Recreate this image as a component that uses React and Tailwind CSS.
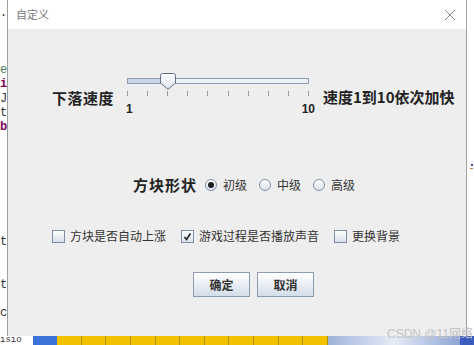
import React, { useState } from 'react';

const codeLines = ['.', '', '', '', 'e', 'i', 'J', 't', 'b', '', '', '', '', '', '', '', 't', '', '', 't', '', 'c'];
const codeColor = { e: 'text-[#3f7f5f]', i: 'text-[#7f0055] font-bold', b: 'text-[#7f0055] font-bold' };

const Radio = ({ checked, label, onClick }) => (
  <div onClick={onClick} className="flex items-center gap-[6px] cursor-pointer">
    <span className="w-[12px] h-[12px] rounded-full border border-[#7d8ea6] bg-gradient-to-b from-white to-[#d9e1eb] flex items-center justify-center">
      {checked && <span className="w-[6px] h-[6px] rounded-full bg-[#1e1e1e]"></span>}
    </span>
    <span className="text-[12px] text-[#333]">{label}</span>
  </div>
);

const Check = ({ checked, label, onClick }) => (
  <div onClick={onClick} className="flex items-center gap-[5px] cursor-pointer">
    <span className="w-[13px] h-[13px] border border-[#7d8ea6] bg-gradient-to-b from-white to-[#d9e1eb] flex items-center justify-center">
      {checked && (
        <svg width="9" height="9" viewBox="0 0 9 9">
          <path d="M1.5 5 L3.5 7.5 L7.5 1.5" stroke="#1e1e1e" strokeWidth="1.6" fill="none" />
        </svg>
      )}
    </span>
    <span className="text-[12px] text-[#333]">{label}</span>
  </div>
);

const App = () => {
  const [level, setLevel] = useState('low');
  const [opts, setOpts] = useState({ rise: false, sound: true, bg: false });
  const toggle = (k) => setOpts({ ...opts, [k]: !opts[k] });

  return (
    <div className="w-[474px] h-[345px] overflow-hidden bg-white flex flex-col relative font-['Noto_Sans_CJK_SC',sans-serif]">
      <div className="flex h-[336px]">
        {/* editor behind */}
        <div className="w-[7px] overflow-hidden pt-[6px] font-['Liberation_Mono',monospace] text-[12px] leading-[14.3px] text-[#333]">
          {codeLines.map((c, i) => (
            <div key={i} className={`h-[14.3px] ${codeColor[c] || ''}`}>{c || '\u00a0'}</div>
          ))}
        </div>

        {/* dialog */}
        <div className="w-[460px] flex flex-col border-l border-r border-[#a0a0a0] shadow-[2px_0_3px_rgba(0,0,0,0.2)]">
          <div className="h-[29px] bg-white flex items-center justify-between pl-[8px] pr-[10px]">
            <span className="text-[11px] text-[#7a7a7a]">自定义</span>
            <svg width="12" height="12" viewBox="0 0 12 12">
              <path d="M1 1 L11 11 M11 1 L1 11" stroke="#8a8a8a" strokeWidth="1" />
            </svg>
          </div>

          <div className="flex-1 bg-[#eeeeee] flex flex-col">
            {/* speed */}
            <div className="flex items-start mt-[44px] pl-[44px]">
              <span className="mt-[14px] text-[15px] font-bold text-[#222] tracking-[0.5px]">下落速度</span>
              <div className="ml-[13px] w-[182px] flex flex-col">
                <div className="relative h-[17px]">
                  <div className="absolute left-0 right-0 top-[5px] h-[6px] border border-[#8d9cb0] bg-[#eef1f5] flex">
                    <div className="w-[36px] bg-[#c9d5e6]"></div>
                  </div>
                  <svg className="absolute left-[33px] top-0" width="16" height="17" viewBox="0 0 16 17">
                    <defs>
                      <linearGradient id="thumb" x1="0" y1="0" x2="0" y2="1">
                        <stop offset="0" stopColor="#ffffff" />
                        <stop offset="1" stopColor="#dfe5ee" />
                      </linearGradient>
                    </defs>
                    <path d="M2.5 0.5 H13.5 Q15.5 0.5 15.5 2.5 V10 L8 16.3 L0.5 10 V2.5 Q0.5 0.5 2.5 0.5 Z" fill="url(#thumb)" stroke="#5f6f86" />
                  </svg>
                </div>
                <div className="flex justify-between mt-[1px] h-[5px]">
                  {Array.from({ length: 10 }).map((_, i) => (
                    <span key={i} className="w-px h-[5px] bg-[#9a9a9a]"></span>
                  ))}
                </div>
                <div className="flex justify-between mt-[7px] -mr-[6px] font-['Liberation_Sans',sans-serif] text-[12px] font-bold text-[#222] leading-[12px]">
                  <span className="-ml-[1px]">1</span>
                  <span>10</span>
                </div>
              </div>
              <span className="ml-[14px] mt-[13px] text-[15px] font-bold text-[#222]">速度1到10依次加快</span>
            </div>

            {/* shape */}
            <div className="flex items-center mt-[60px] pl-[125px] h-[20px]">
              <span className="text-[15px] font-bold text-[#222] tracking-[1px] mr-[8px]">方块形状</span>
              <div className="flex items-center gap-[12px]">
                <Radio checked={level === 'low'} label="初级" onClick={() => setLevel('low')} />
                <Radio checked={level === 'mid'} label="中级" onClick={() => setLevel('mid')} />
                <Radio checked={level === 'high'} label="高级" onClick={() => setLevel('high')} />
              </div>
            </div>

            {/* options */}
            <div className="flex items-center gap-[15px] mt-[31px] pl-[44px] h-[20px]">
              <Check checked={opts.rise} label="方块是否自动上涨" onClick={() => toggle('rise')} />
              <Check checked={opts.sound} label="游戏过程是否播放声音" onClick={() => toggle('sound')} />
              <Check checked={opts.bg} label="更换背景" onClick={() => toggle('bg')} />
            </div>

            {/* buttons */}
            <div className="flex gap-[7px] mt-[26px] pl-[185px]">
              <button className="w-[57px] h-[25px] border border-[#8a9bb3] bg-gradient-to-b from-white to-[#d3dde9] text-[12px] font-bold text-[#333]">确定</button>
              <button className="w-[57px] h-[25px] border border-[#8a9bb3] bg-gradient-to-b from-white to-[#d3dde9] text-[12px] font-bold text-[#333]">取消</button>
            </div>
          </div>
        </div>

        <div className="flex-1 bg-white flex flex-col items-end pt-[164px] gap-[2px] pr-[1px]">
          <span className="w-[2px] h-[2px] bg-[#4040a0]"></span>
          <span className="w-[3px] h-[1px] bg-[#c08040]"></span>
        </div>
      </div>

      {/* bottom strip */}
      <div className="flex h-[9px]">
        <div className="w-[33px] bg-white overflow-hidden font-['Liberation_Mono',monospace] text-[9px] leading-[9px] text-[#333]">isio</div>
        <div className="w-[24px] bg-[#3a74d8]"></div>
        <div className="w-[271px] flex bg-[#f2c200]">
          {Array.from({ length: 11 }).map((_, i) => (
            <div key={i} className="flex-1 border-r border-[#b8920a]"></div>
          ))}
        </div>
        <div className="w-[132px] bg-gradient-to-r from-[#9fb3da] via-[#e6ecf6] to-[#8ea3d4]"></div>
        <div className="flex-1 bg-[#3b5cc0]"></div>
      </div>

      <span className="absolute left-[387px] top-[325px] text-[12px] text-[#c4c4c4] font-['Liberation_Sans','Noto_Sans_CJK_SC',sans-serif]">CSDN @11网络</span>
    </div>
  );
};

export default App;
